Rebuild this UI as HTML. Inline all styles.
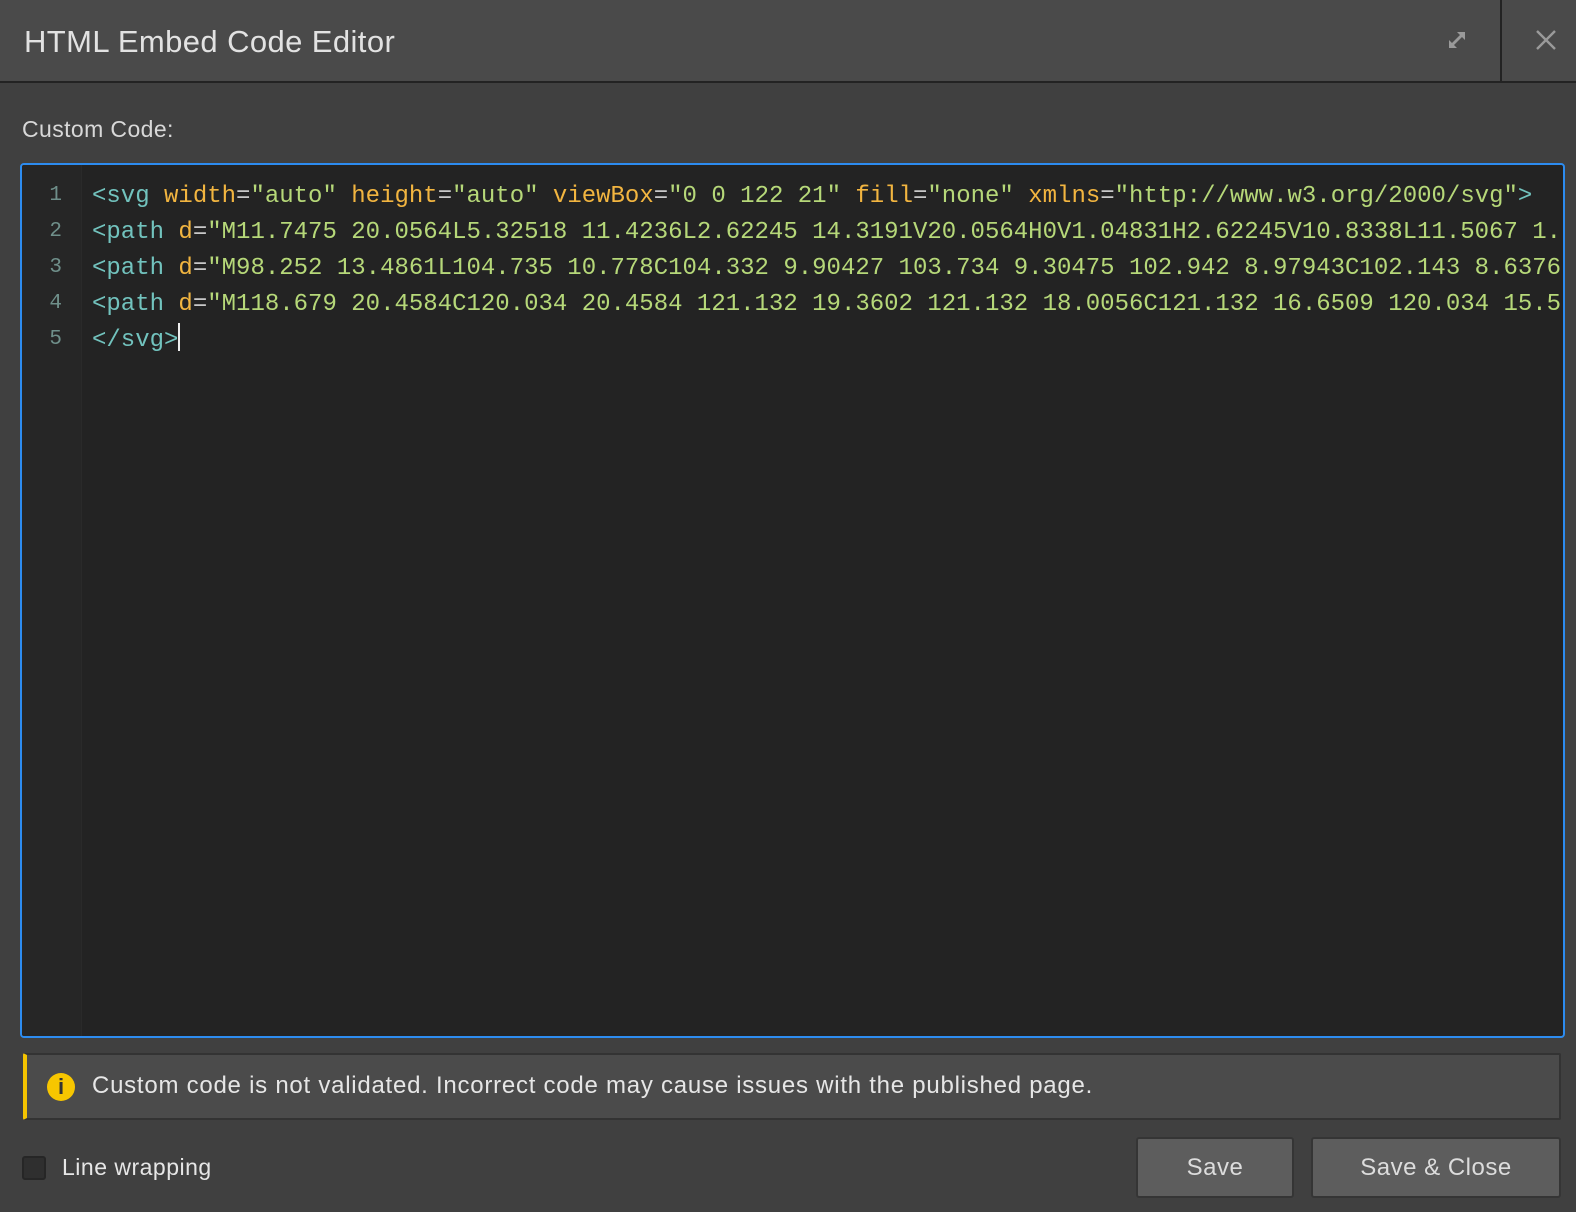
<!DOCTYPE html>
<html><head><meta charset="utf-8"><style>
*{box-sizing:border-box;margin:0;padding:0}
body{width:1576px;height:1212px;background:#404040;font-family:"Liberation Sans",sans-serif;position:relative;overflow:hidden}
.hdr{position:absolute;left:0;top:0;width:1576px;height:83px;background:#4a4a4a;border-bottom:2px solid #232323}
.title{position:absolute;left:24px;top:24px;font-size:31px;color:#e2e2e2;letter-spacing:0.4px}
.div{position:absolute;left:1500px;top:0;width:2px;height:81px;background:#232323}
.lbl{position:absolute;left:22px;top:116px;font-size:23px;color:#d8d8d8;letter-spacing:0.4px}
.ed{position:absolute;left:20px;top:163px;width:1545px;height:875px;border:2px solid #2d8cf0;border-radius:4px;background:#232323;overflow:hidden}
.gut{position:absolute;left:0;top:0;width:60px;height:100%;background:#262626;border-right:1px solid #2a2a2a}
.ln{position:absolute;left:0;width:40px;text-align:right;font-family:"Liberation Mono",monospace;font-size:21px;color:#6f8f8a}
.clip{position:absolute;left:70px;top:14px;width:1490px;height:200px;overflow:hidden}
.code{font-family:"Liberation Mono",monospace;font-size:24px;line-height:36px;white-space:pre;color:#bbb}
.t{color:#72c3be}.a{color:#f2b540}.s{color:#b6d879}.e{color:#c8c8c8}
.cur{display:inline-block;width:2px;height:28px;background:#eee;vertical-align:-5px}
.warn{position:absolute;left:23px;top:1053px;width:1538px;height:67px;background:#4b4b4b;border:2px solid #333;border-left:4px solid #f5c400;border-radius:2px}
.wi{position:absolute;left:20px;top:18px;width:28px;height:28px;border-radius:50%;background:#f7c600;color:#333;font-weight:bold;font-size:22px;text-align:center;line-height:28px}
.wt{position:absolute;left:65px;top:17px;font-size:24px;color:#e6e6e6;letter-spacing:0.75px}
.cb{position:absolute;left:22px;top:1156px;width:24px;height:24px;background:#2f2f2f;border:2px solid #262626;border-radius:3px}
.cbl{position:absolute;left:62px;top:1154px;font-size:23px;color:#e6e6e6;letter-spacing:0.5px}
.btn{position:absolute;top:1137px;height:61px;background:#5d5d5d;border:2px solid #353535;border-radius:3px;color:#dcdcdc;font-size:24px;text-align:center;line-height:57px;letter-spacing:0.5px}
</style></head><body>
<div class="hdr"><div class="title">HTML Embed Code Editor</div></div>
<div class="div"></div>
<svg style="position:absolute;left:1446px;top:29px" width="22" height="22" viewBox="0 0 22 22"><g fill="#9a9a9a"><path d="M3 19 L3 11 L6 14 L14 6 L11 3 L19 3 L19 11 L16 8 L8 16 L11 19 Z"/></g></svg>
<svg style="position:absolute;left:1535px;top:29px" width="22" height="22" viewBox="0 0 22 22"><path d="M2 2L20 20M20 2L2 20" stroke="#9a9a9a" stroke-width="2.4"/></svg>
<div class="lbl">Custom Code:</div>
<div class="ed">
<div class="gut"></div>
<div class="ln" style="top:19px">1</div>
<div class="ln" style="top:55px">2</div>
<div class="ln" style="top:91px">3</div>
<div class="ln" style="top:127px">4</div>
<div class="ln" style="top:163px">5</div>
<div class="clip"><div class="code"><span class="t">&lt;svg</span> <span class="a">width</span><span class="e">=</span><span class="s">"auto"</span> <span class="a">height</span><span class="e">=</span><span class="s">"auto"</span> <span class="a">viewBox</span><span class="e">=</span><span class="s">"0 0 122 21"</span> <span class="a">fill</span><span class="e">=</span><span class="s">"none"</span> <span class="a">xmlns</span><span class="e">=</span><span class="s">"http://www.w3.org/2000/svg"</span><span class="t">&gt;</span>
<span class="t">&lt;path</span> <span class="a">d</span><span class="e">=</span><span class="s">"M11.7475 20.0564L5.32518 11.4236L2.62245 14.3191V20.0564H0V1.04831H2.62245V10.8338L11.5067 1.</span>
<span class="t">&lt;path</span> <span class="a">d</span><span class="e">=</span><span class="s">"M98.252 13.4861L104.735 10.778C104.332 9.90427 103.734 9.30475 102.942 8.97943C102.143 8.6376</span>
<span class="t">&lt;path</span> <span class="a">d</span><span class="e">=</span><span class="s">"M118.679 20.4584C120.034 20.4584 121.132 19.3602 121.132 18.0056C121.132 16.6509 120.034 15.5</span>
<span class="t">&lt;/svg&gt;</span><span class="cur"></span></div></div>
</div>
<div class="warn"><div class="wi">i</div><div class="wt">Custom code is not validated. Incorrect code may cause issues with the published page.</div></div>
<div class="cb"></div><div class="cbl">Line wrapping</div>
<div class="btn" style="left:1136px;width:158px">Save</div>
<div class="btn" style="left:1311px;width:250px">Save &amp; Close</div>
</body></html>
